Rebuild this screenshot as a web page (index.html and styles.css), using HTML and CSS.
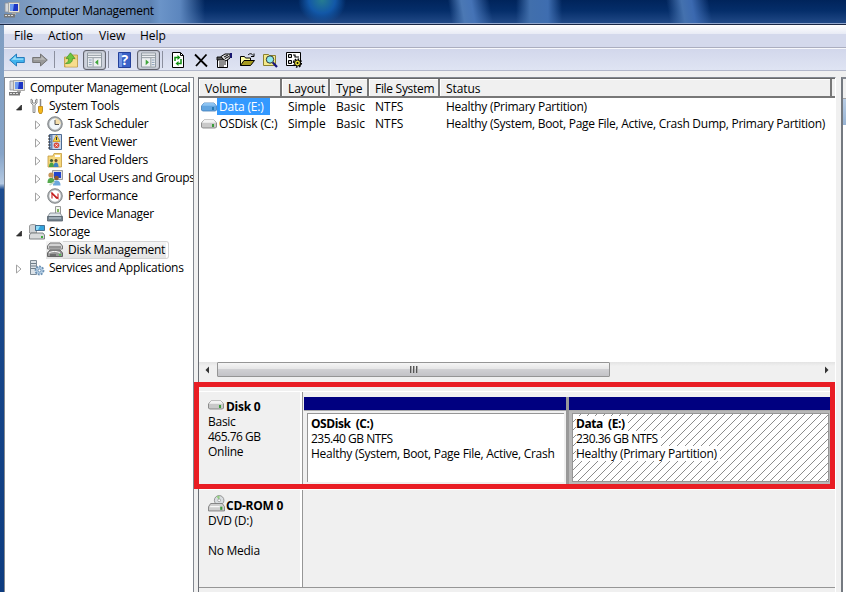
FILE: index.html
```html
<!DOCTYPE html>
<html lang="en">
<head>
    <meta charset="UTF-8">
    <title>Computer Management</title>
    <link rel="stylesheet" href="styles.css">
</head>
<body>
    <!-- icons that are used more than once -->
    <svg class="defs">
        <symbol id="computer" viewBox="0 0 16 16">
            <path d="M1 1h4v9H1z" fill="#d5d8dc" stroke="#8b9097" stroke-width=".8"/>
            <path d="M4.500.500h11v10h-11z" fill="#e4e2d8" stroke="#999" stroke-width=".8"/>
            <path d="M6 2h8v7H6z" fill="#1c35c4"/>
            <path d="M6 2h4l-1 7H6z" fill="#6d9af0"/>
            <path d="M8 11h4v2H8z" fill="#aaa"/>
            <path d="M0 12h11v3.500H0z" fill="#777"/>
            <path d="M1 13h2v1H1zM4 13h2v1H4zM7 13h2v1H7z" fill="#ddd"/>
        </symbol>
        <symbol id="drive" viewBox="0 0 16 10">
            <path d="M3 1h10l2.500 3v4l-1 1h-13l-1-1V4z" fill="#c9c9c9" stroke="#777" stroke-width=".8"/>
            <path d="M3 1h10l2 2.800H1z" fill="#f3f3f3"/>
            <path d="M11 5h2v3h-2z" fill="#3b9c3b"/>
        </symbol>
        <symbol id="drive-selected" viewBox="0 0 16 10">
            <path d="M3 1h10l2.500 3v4l-1 1h-13l-1-1V4z" fill="#62a5e0" stroke="#3f7cb8" stroke-width=".8"/>
            <path d="M3 1h10l2 2.800H1z" fill="#8cc3f2"/>
            <path d="M11 5h2v3h-2z" fill="#2478b4"/>
        </symbol>
        <symbol id="closed" viewBox="0 0 8 10">
            <path d="M1.500 1l4.500 4-4.500 4z" fill="#fff" stroke="#a2a2a2"/>
        </symbol>
        <symbol id="opened" viewBox="0 0 8 10">
            <path d="M6.500 3v5H1.500z" fill="#333" stroke="#222" stroke-width=".7"/>
        </symbol>
    </svg>

    <div class="window">
        <header class="titlebar">
            <svg class="icon"><use href="#computer"/></svg>
            <span>Computer Management</span>
        </header>

        <nav class="menu">
            <span>File</span>
            <span>Action</span>
            <span>View</span>
            <span>Help</span>
        </nav>

        <div class="toolbar">
            <svg class="icon" viewBox="0 0 16 16"><path d="M.700 8L7.500 2v3.500h7.800v5H7.500V14z" fill="#42b4ee" stroke="#1c74b8" stroke-width=".9"/><path d="M2.500 7.700L6.700 4v2.500h7.600v1.200z" fill="#9fe0fa"/></svg>
            <svg class="icon" viewBox="0 0 16 16"><path d="M15.300 8L8.500 2v3.500H.700v5h7.800V14z" fill="#999" stroke="#6d6d6d" stroke-width=".9"/><path d="M13.500 7.700L9.300 4v2.500H1.700v1.200z" fill="#bbb"/></svg>
            <i class="sep"></i>
            <svg class="icon after-sep" viewBox="0 0 16 16"><path d="M1.500 5h6l1-2h6v12h-13z" fill="#efcf78" stroke="#bd973f" stroke-width=".8"/><path d="M3 14.500V8h11v6.500z" fill="#f8dd8c"/><path d="M2.500 11.500c2.500-1 3-2.500 3-5H3L7.500.800l4.500 5.700H9.500c0 4-2.500 5.500-7 5z" fill="#6cc440" stroke="#3f9426" stroke-width=".7"/></svg>
            <span class="pressed">
                <svg class="icon" viewBox="0 0 16 16"><path d="M.500.500h15v15H.500z" fill="#eef0f2" stroke="#8b949c"/><path d="M1 3h14M1 5.500h14" stroke="#8b949c"/><path d="M6.500 6v9" stroke="#8b949c"/><path d="M2 8h3M2 10.500h3M2 13h3" stroke="#7d94b0"/><path d="M12 7.500v6L8.500 10.500z" fill="#3fa53a"/></svg>
            </span>
            <i class="sep tight"></i>
            <svg class="icon after-sep" viewBox="0 0 16 16"><path d="M1.500.500h12v15h-12z" fill="#3a62c8" stroke="#24409a"/><path d="M2 1h3v14H2z" fill="#6f92e2"/><text class="question" x="4.500" y="13">?</text></svg>
            <span class="pressed">
                <svg class="icon" viewBox="0 0 16 16"><path d="M.500.500h15v15H.500z" fill="#eef0f2" stroke="#8b949c"/><path d="M1 3h14M1 5.500h14" stroke="#8b949c"/><path d="M10.500 6v9" stroke="#8b949c"/><path d="M11.500 8h3M11.500 10.500h3M11.500 13h3" stroke="#7d94b0"/><path d="M5 7.500v6l3.500-3z" fill="#3fa53a"/></svg>
            </span>
            <i class="sep tight"></i>
            <svg class="icon" viewBox="0 0 16 16"><path d="M2.500.500h8l3 3v12h-11z" fill="#fff" stroke="#000"/><path d="M10.500.500v3h3" fill="none" stroke="#000"/><path d="M5 9V5.500h3.500M11 7v4.500H8" fill="none" stroke="#129012" stroke-width="1.500"/><path d="M7.500 3v5l3-2.500zM8.500 9v5l-3-2.500z" fill="#129012"/></svg>
            <svg class="icon" viewBox="0 0 16 16"><path d="M2 2.500l12 12M13.500 2.500L3 14" fill="none" stroke="#000" stroke-width="1.800"/></svg>
            <svg class="icon" viewBox="0 0 16 16"><path d="M1.500 5.500h10v10h-10z" fill="#fff" stroke="#000"/><path d="M1 5h7v3H1zM3 10h7M3 12h7M3 14h5" fill="#555" stroke="#000" stroke-width=".9"/><path d="M5 4.500L9 2h5v4l-4 3-3-2z" fill="#ddd" stroke="#000"/><path d="M8 5l4-2M9 6.500l4-2" stroke="#000"/><path d="M14 1h2v5h-2z" fill="#16166e"/></svg>
            <svg class="icon" viewBox="0 0 16 16"><path d="M1.500 13.500v-9h4l1 1.500h5v2.500" fill="#ffffa8" stroke="#000"/><path d="M1.500 13.500l3.500-5h10.500l-4 5z" fill="#a69b20" stroke="#000"/><path d="M9 3c2-2 4-1.500 5 .5M15 1.500v3h-3" fill="none" stroke="#000"/></svg>
            <svg class="icon" viewBox="0 0 16 16"><path d="M1.500 13.500v-11h5l1 1h6v10z" fill="#f4e98a" stroke="#8b8030"/><circle cx="8" cy="7.500" r="3.700" fill="#8be9ee" stroke="#333"/><path d="M10.800 10.500l4.200 4.500" stroke="#15157e" stroke-width="2.200"/></svg>
            <svg class="icon last" viewBox="0 0 16 16"><path d="M.500.500h14v13H.500z" fill="#fff" stroke="#000"/><path d="M2.500 2.500h3v3h-3zM2.500 8.500h3v3h-3z" fill="#ccc" stroke="#000"/><path d="M7 3h2v2h4M7 9h2" fill="none" stroke="#000" stroke-width="1.200"/><circle cx="11.500" cy="11" r="3" fill="#e8df3a" stroke="#000"/><circle cx="11.500" cy="11" r="4" fill="none" stroke="#000" stroke-width="1.500" stroke-dasharray="1.500 1.600"/><circle cx="11.500" cy="11" r="1" fill="#000"/></svg>
        </div>

        <main class="content">
            <aside class="tree">
                <div class="node root"><svg class="icon"><use href="#computer"/></svg><span>Computer Management (Local</span></div>
                <div class="node"><svg class="arrow"><use href="#opened"/></svg>
                    <svg class="icon" viewBox="0 0 16 16"><path d="M2 1v4l2 2v7.500h2V7l2-2V1L6.500 2v3h-3V2z" fill="#e8eaec" stroke="#777" stroke-width=".8"/><path d="M11.500 1v7" stroke="#888" stroke-width="1.500"/><path d="M9.500 8.500h4v5l-1 2h-2l-1-2z" fill="#f5b81c" stroke="#b57e0a" stroke-width=".8"/></svg><span>System Tools</span></div>
                <div class="node sub"><svg class="arrow"><use href="#closed"/></svg>
                    <svg class="icon" viewBox="0 0 16 16"><circle cx="8" cy="8" r="7.300" fill="#a9adb0" stroke="#6f7376" stroke-width=".8"/><circle cx="8" cy="8" r="5.700" fill="#f1f7fb"/><path d="M8 8V2.300A5.700 5.700 0 0 1 13.700 8z" fill="#f4dfae"/><path d="M8 4v4.500h4" fill="none" stroke="#555"/></svg><span>Task Scheduler</span></div>
                <div class="node sub"><svg class="arrow"><use href="#closed"/></svg>
                    <svg class="icon" viewBox="0 0 16 16"><path d="M2.500.500h12v15h-12z" fill="#c9d8ec" stroke="#4d6a92"/><path d="M1 2h3M1 5h3M1 8h3M1 11h3M1 14h3" stroke="#333"/><path d="M4.500 1v14" stroke="#6b8bb8" stroke-width="2"/><path d="M9.500 1l3.500 6.500H6z" fill="#f6d743" stroke="#c18a12" stroke-width=".7"/><path d="M9.500 3v3" stroke="#333"/><circle cx="9.500" cy="11.300" r="2.800" fill="#d9483a"/><path d="M8.300 10.200l2.400 2.400M10.700 10.200l-2.400 2.400" stroke="#fff" stroke-width=".8"/></svg><span>Event Viewer</span></div>
                <div class="node sub"><svg class="arrow"><use href="#closed"/></svg>
                    <svg class="icon" viewBox="0 0 16 16"><path d="M1 4h5l1-2.500h7.500V15H1z" fill="#f5d77c" stroke="#c39b3c" stroke-width=".8"/><path d="M8 3h5v2H8z" fill="#fff"/><circle cx="4.500" cy="8.500" r="1.600" fill="#425b38"/><circle cx="9" cy="8.500" r="1.600" fill="#684b2b"/><path d="M2 15c0-3 1-4.500 2.500-4.500S7 12 7 15z" fill="#4aa143"/><path d="M6.500 15c0-3 1-4.500 2.500-4.500s2.500 1.500 2.500 4.500z" fill="#3d82c3"/></svg><span>Shared Folders</span></div>
                <div class="node sub"><svg class="arrow"><use href="#closed"/></svg>
                    <svg class="icon" viewBox="0 0 16 16"><path d="M5.500.500h10v9h-10z" fill="#ddd" stroke="#888" stroke-width=".8"/><path d="M7 2h7v6H7z" fill="#2144ce"/><circle cx="4" cy="5" r="2.600" fill="#c69458"/><circle cx="9.500" cy="8" r="2.300" fill="#8b582d"/><path d="M.500 13c0-4 1.500-5 3.500-5s3.500 1 3.500 5z" fill="#54a94c"/><path d="M6 15.500c0-4 1.500-5 3.500-5s4 1 4 5z" fill="#6ba7dc"/><path d="M2.500 15l5-3" stroke="#c6d9c3" stroke-width="1.500"/></svg><span>Local Users and Groups</span></div>
                <div class="node sub"><svg class="arrow"><use href="#closed"/></svg>
                    <svg class="icon" viewBox="0 0 16 16"><circle cx="8" cy="8" r="7.300" fill="#b0b4b7" stroke="#6e7275" stroke-width=".8"/><circle cx="8" cy="8" r="5.700" fill="#fff"/><path d="M5 10.500V5.500l6 5v-5" fill="none" stroke="#c42020" stroke-width="1.100"/><path d="M4.500 4.500l5.500 6" stroke="#c42020" stroke-width="1.500"/></svg><span>Performance</span></div>
                <div class="node sub"><i class="arrow"></i>
                    <svg class="icon" viewBox="0 0 16 16"><path d="M8.500.500h5v7h-5z" fill="#f2f5ee" stroke="#999"/><path d="M10 3h2v3h-2z" fill="#7db65d"/><path d="M3 7h10l2 3v1H1v-1z" fill="#dbe2e7" stroke="#78828a" stroke-width=".8"/><path d="M.500 10.500h15v4.500H.500z" fill="#73828e" stroke="#55616b" stroke-width=".8"/><path d="M2 12h12" stroke="#cbd6de"/></svg><span>Device Manager</span></div>
                <div class="node"><svg class="arrow"><use href="#opened"/></svg>
                    <svg class="icon" viewBox="0 0 16 16"><path d="M.500 2c0-2 7-2 7 0v7h-7z" fill="#cfd3d6" stroke="#888" stroke-width=".8"/><path d="M6.500 1.500h9v5h-9z" fill="#33a3dc" stroke="#357" stroke-width=".8"/><path d="M7 2h4L9 6H7z" fill="#90dcf8"/><path d="M2 9h12l1.500 2v4H.500v-4z" fill="#d8dadb" stroke="#737779" stroke-width=".9"/><path d="M12 12h2v2h-2z" fill="#3fac3d"/></svg><span>Storage</span></div>
                <div class="node sub selected"><i class="arrow"></i>
                    <svg class="icon" viewBox="0 0 16 16"><path d="M3 1h10l2.500 3v3H.500V4z" fill="#d2d2d2" stroke="#777"/><path d="M2 5h12" stroke="#555"/><path d="M3 8h10l2.500 3v3.500H.500V11z" fill="#999" stroke="#666"/><path d="M2 11c3-2 8-2 11 0" fill="none" stroke="#fff"/><path d="M3 13h6" stroke="#444"/><path d="M12 12h2v1.500h-2z" fill="#4c4"/></svg><span>Disk Management</span></div>
                <div class="node"><svg class="arrow"><use href="#closed"/></svg>
                    <svg class="icon" viewBox="0 0 16 16"><path d="M1.500.500h6v14h-6z" fill="#dde3e8" stroke="#7e8b95"/><path d="M2 3.500h5M2 6h5M2 8.500h5" stroke="#6e7d88"/><circle cx="10.500" cy="10.500" r="4" fill="#b7d0e6" stroke="#6c91b4" stroke-width="1.800" stroke-dasharray="1.800 1.200"/><circle cx="10.500" cy="10.500" r="1.500" fill="#fff" stroke="#6c91b4"/></svg><span>Services and Applications</span></div>
            </aside>

            <section class="middle">
                <div class="volumes">
                    <div class="row head">
                        <span>Volume</span><span>Layout</span><span>Type</span><span>File System</span><span>Status</span>
                    </div>
                    <div class="row">
                        <span class="volume active"><svg class="drive"><use href="#drive-selected"/></svg><b>Data (E:)</b></span>
                        <span>Simple</span><span>Basic</span><span>NTFS</span><span class="status">Healthy (Primary Partition)</span>
                    </div>
                    <div class="row">
                        <span class="volume"><svg class="drive"><use href="#drive"/></svg><b>OSDisk (C:)</b></span>
                        <span>Simple</span><span>Basic</span><span>NTFS</span><span class="status">Healthy (System, Boot, Page File, Active, Crash Dump, Primary Partition)</span>
                    </div>
                </div>

                <div class="scrollbar">
                    <svg class="scroll-arrow" viewBox="0 0 18 16"><path d="M10 4.500v7L6.500 8z" fill="#333"/></svg>
                    <div class="thumb"><i></i><i></i><i></i></div>
                    <svg class="scroll-arrow right" viewBox="0 0 18 16"><path d="M8 4.500v7L11.500 8z" fill="#333"/></svg>
                </div>

                <div class="disks">
                    <div class="disk">
                        <div class="disk-info">
                            <strong><svg class="drive"><use href="#drive"/></svg>Disk 0</strong>
                            <p>Basic</p>
                            <p class="size">465.76 GB</p>
                            <p>Online</p>
                        </div>
                        <div class="partitions">
                            <div class="partition">
                                <div class="bar"></div>
                                <div class="details">
                                    <strong>OSDisk&nbsp; (C:)</strong>
                                    <p class="size">235.40 GB NTFS</p>
                                    <p>Healthy (System, Boot, Page File, Active, Crash</p>
                                </div>
                            </div>
                            <div class="partition current">
                                <div class="bar"></div>
                                <div class="details">
                                    <svg class="hatch">
                                        <pattern id="lines" width="8" height="8" patternUnits="userSpaceOnUse"><path d="M-1 9L9-1M-1 1L1-1M7 9L9 7" stroke="#8c8c8c"/></pattern>
                                        <rect width="100%" height="100%" fill="url(#lines)"/>
                                    </svg>
                                    <strong>Data&nbsp; (E:)</strong>
                                    <p class="size">230.36 GB NTFS</p>
                                    <p>Healthy (Primary Partition)</p>
                                </div>
                            </div>
                        </div>
                    </div>
                    <div class="disk cdrom">
                        <div class="disk-info">
                            <strong><svg class="cd" viewBox="0 0 16 16"><circle cx="10.500" cy="5" r="4.500" fill="#d9dde0" stroke="#888" stroke-width=".8"/><path d="M10.500 5L8 1.500l3-1z" fill="#92cf80"/><circle cx="10.500" cy="5" r="1.300" fill="#fff" stroke="#888" stroke-width=".6"/><path d="M2.500 8h11l2 3v4H.500v-4z" fill="#cfcfcf" stroke="#777" stroke-width=".8"/><path d="M2 11h9" stroke="#fff"/><path d="M11.500 11h2v3h-2z" fill="#3b9c3b"/></svg>CD-ROM 0</strong>
                            <p>DVD (D:)</p>
                            <p>&nbsp;</p>
                            <p>No Media</p>
                        </div>
                        <div class="partitions"></div>
                    </div>
                    <div class="highlight"></div>
                </div>
            </section>

            <aside class="actions">
                <div class="actions-head"></div>
                <div class="actions-title"></div>
            </aside>
        </main>
    </div>
</body>
</html>
```
FILE: styles.css
```css
* {
    box-sizing: border-box;
}
body {
    margin: 0;
    font-family: "Open Sans", "Noto Sans", sans-serif;
    font-size: 12px;
    letter-spacing: -.27px;
    color: #000;
}
p {
    margin: 0;
}
.defs {
    position: absolute;
    width: 0;
    height: 0;
}
.window {
    width: 846px;
    height: 592px;
    overflow: hidden;
    padding-left: 4px;
    display: flex;
    flex-direction: column;
    background: linear-gradient(#7d9cc0, #86a4c8 26%, #b4c9e2 31%, #1d4c8f 32%, #0d3c80);
    white-space: nowrap;
}
.icon {
    width: 16px;
    height: 16px;
    flex: none;
}

/* title, menu, toolbar */
.titlebar {
    height: 25px;
    margin-left: -4px;
    padding: 0 0 4px 4px;
    display: flex;
    align-items: center;
    gap: 5px;
    border-bottom: 1px solid #1a2745;
    box-shadow: inset 0 -1px #93a8cd;
    background:
        radial-gradient(ellipse 24px 24px at 322px 0, #267c90, #1258a8 55%, transparent),
        linear-gradient(80deg, transparent 445px, #4b78b4 458px, #4573b6 468px, transparent 486px),
        linear-gradient(90deg, transparent 516px, #416fac 530px, #3e6db0 548px, transparent 562px),
        linear-gradient(80deg, transparent 660px, #4471ae 675px, #3b69b0 685px, transparent 702px),
        linear-gradient(90deg, #7190b8, #8aa6ca 60px, #5d82b2 150px, #6b94c8 160px, #5c86be 180px, transparent 205px),
        linear-gradient(#00245b, #052e6a 45%, #234b88);
}
.menu {
    height: 23px;
    flex: none;
    padding: 0 0 1px 10px;
    display: flex;
    align-items: center;
    background: linear-gradient(#fff, #e8ebf5 9px, #d4d9ec 9px, #d4d9ec);
    border-bottom: 1px solid #abaebf;
    letter-spacing: 0;
}
.menu span:nth-child(1) { width: 34px; }
.menu span:nth-child(2) { width: 51px; }
.menu span:nth-child(3) { width: 41px; }
.toolbar {
    height: 23px;
    flex: none;
    padding: 0 0 0 5px;
    display: flex;
    align-items: center;
    gap: 7px;
    background: linear-gradient(#d2d7eb, #dfe4f3);
    border-top: 1px solid #f7f8fc;
    border-bottom: 1px solid #b2b7ca;
}
.sep {
    width: 1px;
    height: 17px;
    margin-left: -1px;
    background: #8b8f9e;
}
.sep.tight {
    margin-left: -5px;
}
.after-sep {
    margin-left: 1px;
}
.last {
    margin-left: 1px;
}
.pressed {
    width: 23px;
    height: 20px;
    margin-left: -3px;
    padding: 1px 3px;
    border: 1px solid #62646e;
    border-radius: 3px;
    background: #ced2dc;
    box-shadow: inset 0 0 1px #62646e;
}
.pressed .icon {
    display: block;
    width: 15px;
}
.question {
    font-size: 14px;
    font-weight: bold;
    letter-spacing: 0;
    fill: #fff;
}

.content {
    flex: 1;
    min-height: 0;
    padding-top: 6px;
    display: flex;
    background: #f0f0f0;
}

/* left tree */
.tree {
    width: 190px;
    padding-top: 1px;
    overflow: hidden;
    background: #fff;
    border: 1px solid #82878f;
    border-bottom: 0;
}
.node {
    height: 18px;
    padding-left: 10px;
    display: flex;
    align-items: center;
}
.node.root {
    padding-left: 4px;
}
.node.sub {
    padding-left: 29px;
}
.node .arrow {
    width: 8px;
    height: 10px;
    margin: 2px 6px 0 0;
    flex: none;
}
.node.sub .arrow {
    margin-right: 5px;
}
.node span {
    height: 18px;
    padding: 0 3px 0 4px;
    line-height: 17px;
}
.node.sub span {
    padding-left: 5px;
}
.node.root span {
    padding: 0 0 0 5px;
    letter-spacing: -.36px;
}
.node.selected {
    background: linear-gradient(#f5f5f5, #e3e3e3) 41px 0 / 120px 18px no-repeat;
}
.node.selected span {
    border: 1px solid #d4d4d4;
    border-left: 0;
    border-radius: 0 3px 3px 0;
    line-height: 15px;
}

/* middle pane */
.middle {
    width: 638px;
    margin-left: 4px;
    display: flex;
    flex-direction: column;
    border-left: 1px solid #6b6e75;
    border-top: 1px solid #82878f;
    border-right: 1px solid #fff;
}
.volumes {
    height: 284px;
    flex: none;
    background: #fff;
    border-top: 1px solid #696969;
}
.row {
    height: 17px;
    display: grid;
    grid-template-columns: 83px 48px 39px 71px 392px;
    line-height: 17px;
    letter-spacing: 0;
}
.row span {
    padding-left: 6px;
}
.row .status {
    letter-spacing: -.27px;
}
.row.head {
    height: 19px;
    line-height: 20px;
    letter-spacing: -.1px;
    background: #f0f0f0;
    border-bottom: 2px solid #777;
}
.head span {
    height: 17px;
    border-right: 2px solid #777;
    box-shadow: inset 1px 1px #fff;
}
.head span:nth-child(4) {
    letter-spacing: -.3px;
}
.row .volume {
    padding-left: 2px;
    display: flex;
    align-items: center;
    letter-spacing: -.2px;
}
.volume b {
    padding: 0 4px 0 2px;
    font-weight: normal;
}
.volume.active b {
    padding-right: 6px;
    color: #fff;
    background: #3399ff;
}
.drive {
    width: 16px;
    height: 10px;
    flex: none;
}
.scrollbar {
    height: 16px;
    flex: none;
    display: flex;
    background: linear-gradient(#e3e3e3, #f0f0f0 4px);
}
.scroll-arrow {
    width: 18px;
    height: 16px;
}
.scroll-arrow.right {
    margin-left: auto;
}
.thumb {
    width: 393px;
    height: 15px;
    display: flex;
    justify-content: center;
    align-items: center;
    gap: 1px;
    background: linear-gradient(#f5f5f5, #e6e6e7 45%, #d0d0d3 50%, #c3c3c7);
    border: 1px solid #959595;
    border-radius: 1px;
}
.thumb i {
    width: 2px;
    height: 7px;
    border-left: 1px solid #555;
    border-right: 1px solid #aaa;
}

/* disk map */
.disks {
    position: relative;
    flex: 1;
    padding-top: 13px;
    line-height: 15px;
}
.disk {
    height: 98px;
    display: flex;
    border-top: 1px solid #fff;
}
.disk-info {
    width: 104px;
    padding: 7px 0 0 9px;
    border-right: 1px solid #969696;
    box-shadow: inset -2px 0 #fff;
}
.disk-info strong {
    display: flex;
    align-items: center;
    gap: 2px;
    height: 15px;
}
.disk-info .drive {
    margin-top: -3px;
}
.size {
    letter-spacing: -.5px;
}
.partitions {
    flex: 1;
    display: flex;
    gap: 2px;
    padding: 5px 0 0 1px;
}
.partition {
    width: 263px;
    height: 88px;
    border-right: 1px solid #999;
}
.bar {
    height: 14px;
    background: #000080;
    border-bottom: 1px solid #aaa;
}
.details {
    position: relative;
    height: 69px;
    margin: 2px 2px 0 3px;
    padding: 2px 3px;
    background: #fff;
    border: 1px solid #969696;
    border-right: 0;
    border-bottom: 0;
}
.details strong,
.details p {
    position: relative;
    display: table;
}
.details strong {
    letter-spacing: -.45px;
}
.current {
    width: 262px;
    background: #b8b8b8;
    border-right: 0;
    box-shadow: -2px 0 #999;
}
.current .details {
    border: 1px solid #969696;
    margin: 2px 2px 0 3px;
    padding: 2px 3px;
}
.current .details strong,
.current .details p {
    padding-right: 3px;
    background: #fff;
}
.hatch {
    position: absolute;
    inset: 0;
    width: 100%;
    height: 100%;
}
.cdrom {
    height: 99px;
    border-bottom: 1px solid #969696;
}
.cdrom strong {
    margin-top: 1px;
    gap: 1px;
}
.cd {
    width: 17px;
    height: 17px;
    margin-top: -5px;
    flex: none;
}
.highlight {
    position: absolute;
    left: -5px;
    top: 4px;
    width: 641px;
    height: 107px;
    border: 5px solid #e91d24;
}

/* cut off pane at the right edge */
.actions {
    flex: 1;
    margin-left: 5px;
    background: #fff;
    border-left: 2px solid #747980;
    border-top: 2px solid #82878f;
}
.actions-head {
    height: 20px;
    background: #f0f0f0;
    border-bottom: 1px solid #a0a0a0;
}
.actions-title {
    height: 26px;
    background: linear-gradient(#b9cde5, #98b4d4);
}
```
